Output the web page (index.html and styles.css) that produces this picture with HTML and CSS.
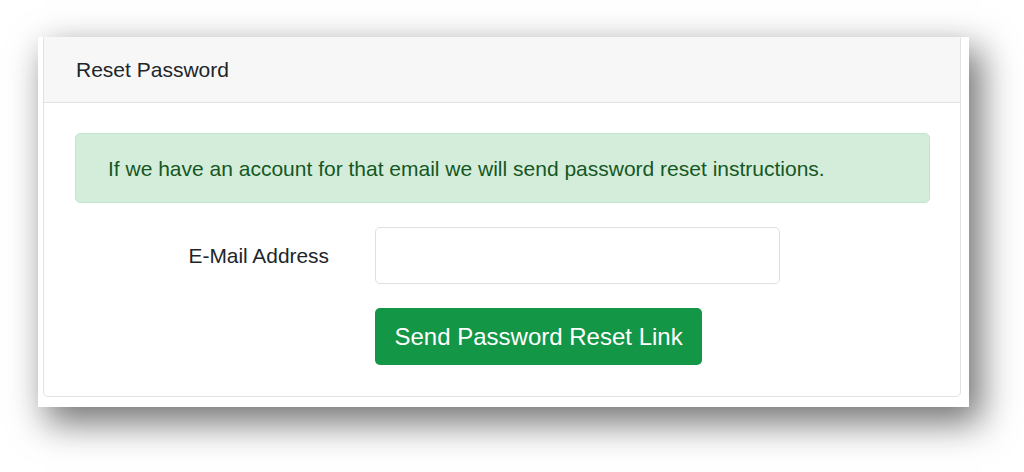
FILE: index.html
```html
<!DOCTYPE html>
<html lang="en">
<head>
  <meta charset="UTF-8">
  <meta name="viewport" content="width=device-width, initial-scale=1.0">
  <title>Reset Password</title>
  <link rel="stylesheet" href="styles.css">
</head>
<body>
  <div class="shot">
    <div class="card">
      <div class="card_head">Reset Password</div>
      <div class="card_body">
        <div class="alert">If we have an account for that email we will send password reset instructions.</div>
        <form class="reset_form" action="#">
          <label for="email" class="lbl">E-Mail Address</label>
          <input type="email" id="email" class="inp">
          <button type="submit" class="btn">Send Password Reset Link</button>
        </form>
      </div>
    </div>
  </div>
</body>
</html>
```

FILE: styles.css
```css
*{box-sizing: border-box;}
html, body{margin: 0; padding: 0; background: #fff;}
body{
  font-family: "Liberation Sans", Arial, sans-serif;
  color: #212529;
  padding: 37px 0 0 38px;
  height: 472px;
  overflow: hidden;
}
.shot{
  width: 931px;
  height: 370px;
  background: #fff;
  padding: 0 8px 10px 5px;
  overflow: hidden;
  box-shadow: 10px 14px 34px 2px rgba(0,0,0,.55);
}
.card{
  margin-top: -3px;
  height: 363px;
  border: 1px solid #e2e2e2;
  border-radius: 5px;
  overflow: hidden;
}
.card_head{
  background: #f7f7f7;
  border-bottom: 1px solid #e2e2e2;
  font-size: 21px;
  line-height: 31px;
  padding: 19px 32px 17px;
}
.card_body{
  padding: 30px 30px 31px 31px;
}
.alert{
  background: #d4edda;
  border: 1px solid #c3e6cb;
  border-radius: 5px;
  color: #155724;
  font-size: 21px;
  line-height: 31px;
  padding: 19px 32px 18px;
}
.reset_form{
  display: grid;
  grid-template-columns: 254px 405px;
  column-gap: 46px;
  row-gap: 24px;
  margin-top: 24px;
  align-items: center;
}
.lbl{
  text-align: right;
  font-size: 20.9px;
  line-height: 31px;
}
.inp{
  height: 57px;
  border: 1px solid #dcdfe4;
  border-radius: 5px;
  font: inherit;
  font-size: 20px;
  padding: 0 16px;
}
.btn{
  grid-column: 2;
  justify-self: start;
  background: #149647;
  color: #fff;
  border: 0;
  border-radius: 5px;
  font-family: inherit;
  font-size: 24px;
  line-height: 37px;
  padding: 10px 19.5px;
  cursor: pointer;
}
```
